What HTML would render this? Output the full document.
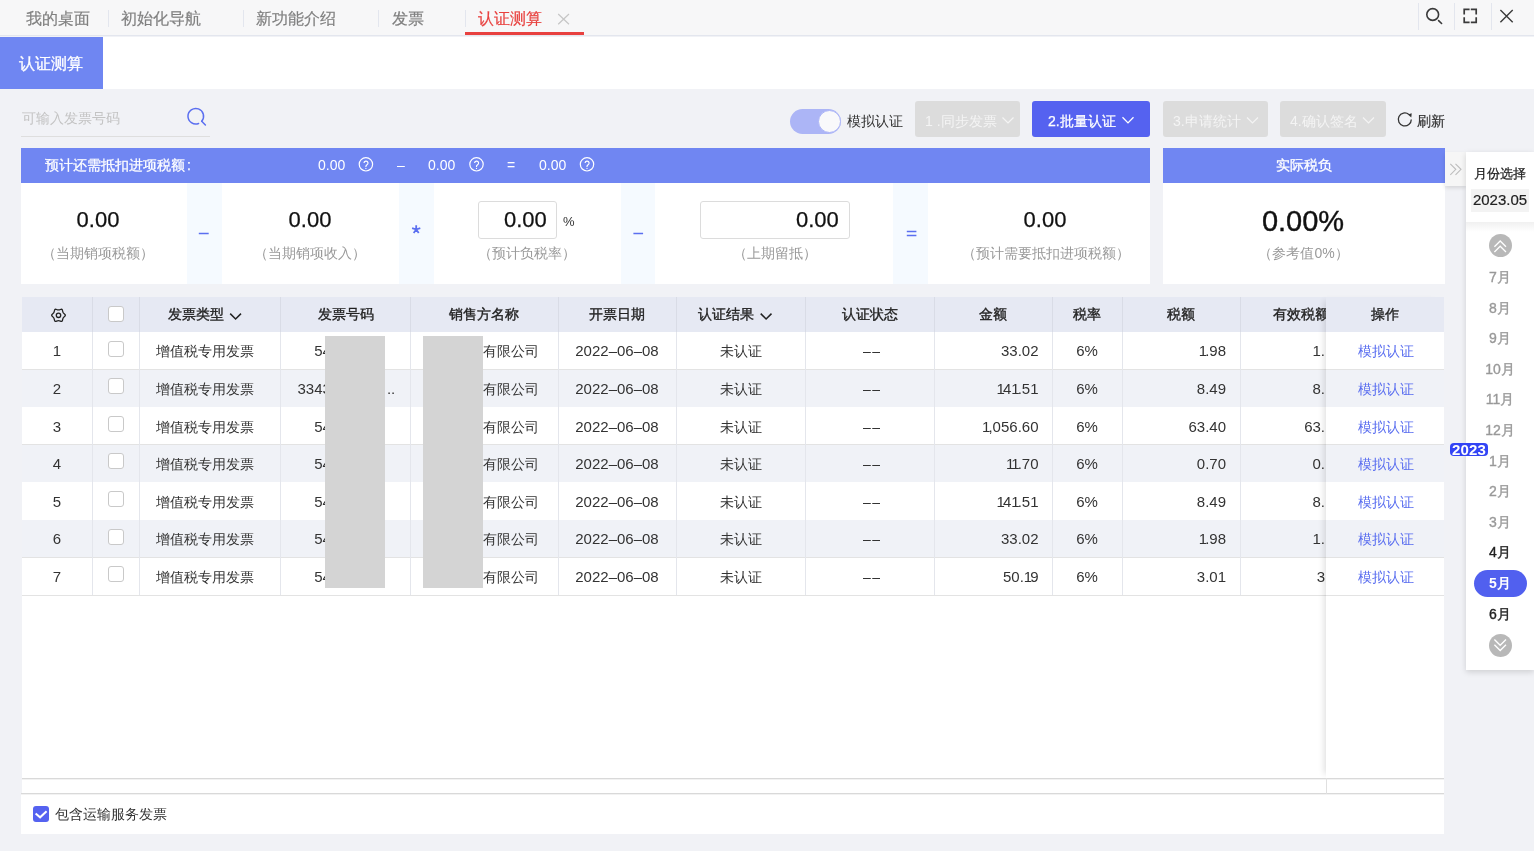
<!DOCTYPE html>
<html><head><meta charset="utf-8">
<style>
*{box-sizing:border-box;margin:0;padding:0}
html,body{width:1534px;height:851px;overflow:hidden;background:#f1f2f6;font-family:"Liberation Sans",sans-serif;color:#333}
.a{position:absolute;white-space:nowrap}
.c{position:absolute;white-space:nowrap;text-align:center}
.tab{position:absolute;top:9px;font-size:16px;line-height:20px;color:#808080;white-space:nowrap;-webkit-text-stroke:0.2px currentColor}
.sep{position:absolute;top:10px;width:1px;height:17px;background:#e3e6ee}
.btn{position:absolute;top:101px;height:36px;border-radius:3px;background:#dcdcdc;color:#f4f4f4;font-size:14px;white-space:nowrap}
.btn.pri{background:#5562f0;color:#fff}
.bar{position:absolute;top:148px;height:35px;background:#7086f2;color:#fff;font-size:14px}
.panel{position:absolute;top:183px;height:101px;background:#fff}
.big{font-size:22px;color:#111;line-height:26px;-webkit-text-stroke:0.25px #111}
.lbl{font-size:14px;color:#999;line-height:18px}
.opcol{position:absolute;top:183px;width:35px;height:101px;background:#f5faff}
.vl{position:absolute;width:1px;background:#e4e6ec}
.hl{position:absolute;height:1px;background:#e3e3e3}
.cb{position:absolute;width:16px;height:16px;border:1px solid #c9c9c9;border-radius:3px;background:#fff}
.td{position:absolute;font-size:14px;line-height:18px;color:#333;white-space:nowrap;overflow:hidden;text-align:center}
.mon{position:absolute;left:1466px;width:68px;text-align:center;font-size:14px;color:#999;line-height:18px}
</style></head><body>
<div id="root" style="position:absolute;left:0;top:0;width:1534px;height:851px;overflow:hidden;will-change:transform">
<div class="a" style="left:0px;top:0px;width:1534px;height:36px;background:#f7f7f8;border-bottom:1px solid #e3e6ee"></div>
<div class="tab" style="left:26px">我的桌面</div>
<div class="tab" style="left:121px">初始化导航</div>
<div class="tab" style="left:256px">新功能介绍</div>
<div class="tab" style="left:392px">发票</div>
<div class="sep" style="left:108px"></div>
<div class="sep" style="left:243px"></div>
<div class="sep" style="left:378px"></div>
<div class="sep" style="left:465px"></div>
<div class="tab" style="left:478px;color:#e8413f">认证测算</div>
<div class="a" style="left:465px;top:32px;width:119px;height:3px;background:#e8413f"></div>
<div class="sep" style="left:1418px;top:3px;height:27px"></div>
<div class="sep" style="left:1454px;top:3px;height:27px"></div>
<div class="sep" style="left:1491px;top:3px;height:27px"></div>
<div class="a" style="left:0px;top:37px;width:1534px;height:52px;background:#fff"></div>
<div class="a" style="left:0px;top:37px;width:103px;height:52px;background:#6f86f2"></div>
<div class="c " style="left:-149.5px;top:53.5px;width:400px;font-size:16px;line-height:20px;color:#fff;-webkit-text-stroke:0.3px #fff">认证测算</div>
<div class="a " style="left:22px;top:109px;font-size:14px;line-height:18px;color:#c3c3c3">可输入发票号码</div>
<div class="a" style="left:21px;top:136px;width:189px;height:1px;background:#dedede"></div>
<div class="a" style="left:790px;top:109px;width:51px;height:25px;border-radius:13px;background:#acb5f6"></div>
<div class="a" style="left:818px;top:110px;width:23px;height:23px;border-radius:50%;background:#f9f9fb;border:1.5px solid #acb5f6"></div>
<div class="a " style="left:847px;top:112px;font-size:14px;line-height:18px;color:#333">模拟认证</div>
<div class="btn" style="left:915px;width:105px"><span class="a" style="left:10px;top:11px;line-height:18px;">1 .同步发票</span></div>
<div class="btn pri" style="left:1032px;width:118px"><span class="a" style="left:16px;top:11px;line-height:18px;-webkit-text-stroke:0.25px #fff">2.批量认证</span></div>
<div class="btn" style="left:1163px;width:105px"><span class="a" style="left:10px;top:11px;line-height:18px;">3.申请统计</span></div>
<div class="btn" style="left:1280px;width:106px"><span class="a" style="left:10px;top:11px;line-height:18px;">4.确认签名</span></div>
<div class="a " style="left:1417px;top:112px;font-size:14px;line-height:18px;color:#333;-webkit-text-stroke:0.2px #333">刷新</div>
<div class="a" style="left:21px;top:148px;width:1129px;height:35px;background:#7086f2"></div>
<div class="a" style="left:1163px;top:148px;width:282px;height:35px;background:#7086f2"></div>
<div class="a " style="left:45px;top:156px;font-size:14px;line-height:18px;color:#fff;-webkit-text-stroke:0.25px #fff">预计还需抵扣进项税额<span style="margin-left:2px">:</span></div>
<div class="a " style="left:318px;top:156px;font-size:14px;line-height:18px;color:#fff">0.00</div>
<div class="a " style="left:428px;top:156px;font-size:14px;line-height:18px;color:#fff">0.00</div>
<div class="a " style="left:539px;top:156px;font-size:14px;line-height:18px;color:#fff">0.00</div>
<div class="a " style="left:397px;top:156px;font-size:14px;line-height:18px;color:#fff">–</div>
<div class="a " style="left:507px;top:156px;font-size:14px;line-height:18px;color:#fff">=</div>
<div class="c " style="left:1104px;top:156px;width:400px;font-size:14px;line-height:18px;color:#fff;-webkit-text-stroke:0.3px #fff">实际税负</div>
<div class="a" style="left:21px;top:183px;width:1129px;height:101px;background:#fff"></div>
<div class="a" style="left:1163px;top:183px;width:282px;height:101px;background:#fff"></div>
<div class="a" style="left:187px;top:183px;width:35px;height:101px;background:#f5faff"></div>
<div class="a" style="left:399px;top:183px;width:35px;height:101px;background:#f5faff"></div>
<div class="a" style="left:621px;top:183px;width:34px;height:101px;background:#f5faff"></div>
<div class="a" style="left:893px;top:183px;width:35px;height:101px;background:#f5faff"></div>
<div class="c big" style="left:-102px;top:207px;width:400px;">0.00</div>
<div class="c lbl" style="left:-102px;top:244px;width:400px;">（当期销项税额）</div>
<div class="c big" style="left:110px;top:207px;width:400px;">0.00</div>
<div class="c lbl" style="left:110px;top:244px;width:400px;">（当期销项收入）</div>
<div class="a" style="left:478px;top:201px;width:79px;height:38px;border:1px solid #dcdcdc;border-radius:3px;background:#fff"></div>
<div class="a big" style="left:504px;top:207px;">0.00</div>
<div class="a " style="left:563px;top:214px;font-size:13px;line-height:16px;color:#333">%</div>
<div class="c lbl" style="left:327px;top:244px;width:400px;">（预计负税率）</div>
<div class="a" style="left:700px;top:201px;width:150px;height:38px;border:1px solid #dcdcdc;border-radius:3px;background:#fff"></div>
<div class="a big" style="left:796px;top:207px;">0.00</div>
<div class="c lbl" style="left:575px;top:244px;width:400px;">（上期留抵）</div>
<div class="c big" style="left:845px;top:207px;width:400px;">0.00</div>
<div class="c lbl" style="left:846px;top:244px;width:400px;">（预计需要抵扣进项税额）</div>
<div class="c big" style="left:1103px;top:204px;width:400px;font-size:29px;line-height:34px;-webkit-text-stroke:0.4px #111">0.00%</div>
<div class="c lbl" style="left:1103.5px;top:244px;width:400px;">（参考值0%）</div>
<div class="a" style="left:22px;top:297px;width:1422px;height:537px;background:#fff"></div>
<div class="a" style="left:22px;top:297px;width:1422px;height:35px;background:#e6e9f3"></div>
<div class="a" style="left:22px;top:332.00px;width:1422px;height:37.60px;background:#fff"></div>
<div class="hl" style="left:22px;top:369.20px;width:1422px"></div>
<div class="a" style="left:22px;top:369.60px;width:1422px;height:37.60px;background:#f0f2f7"></div>
<div class="hl" style="left:22px;top:406.80px;width:1422px"></div>
<div class="a" style="left:22px;top:407.20px;width:1422px;height:37.60px;background:#fff"></div>
<div class="hl" style="left:22px;top:444.40px;width:1422px"></div>
<div class="a" style="left:22px;top:444.80px;width:1422px;height:37.60px;background:#f0f2f7"></div>
<div class="hl" style="left:22px;top:482.00px;width:1422px"></div>
<div class="a" style="left:22px;top:482.40px;width:1422px;height:37.60px;background:#fff"></div>
<div class="hl" style="left:22px;top:519.60px;width:1422px"></div>
<div class="a" style="left:22px;top:520.00px;width:1422px;height:37.60px;background:#f0f2f7"></div>
<div class="hl" style="left:22px;top:557.20px;width:1422px"></div>
<div class="a" style="left:22px;top:557.60px;width:1422px;height:37.60px;background:#fff"></div>
<div class="hl" style="left:22px;top:594.80px;width:1422px"></div>
<div class="vl" style="left:92px;top:297px;height:35px;background:#d9dce6"></div>
<div class="vl" style="left:92px;top:332px;height:263.20px"></div>
<div class="vl" style="left:139px;top:297px;height:35px;background:#d9dce6"></div>
<div class="vl" style="left:139px;top:332px;height:263.20px"></div>
<div class="vl" style="left:280px;top:297px;height:35px;background:#d9dce6"></div>
<div class="vl" style="left:280px;top:332px;height:263.20px"></div>
<div class="vl" style="left:410px;top:297px;height:35px;background:#d9dce6"></div>
<div class="vl" style="left:410px;top:332px;height:263.20px"></div>
<div class="vl" style="left:558px;top:297px;height:35px;background:#d9dce6"></div>
<div class="vl" style="left:558px;top:332px;height:263.20px"></div>
<div class="vl" style="left:676px;top:297px;height:35px;background:#d9dce6"></div>
<div class="vl" style="left:676px;top:332px;height:263.20px"></div>
<div class="vl" style="left:805px;top:297px;height:35px;background:#d9dce6"></div>
<div class="vl" style="left:805px;top:332px;height:263.20px"></div>
<div class="vl" style="left:934px;top:297px;height:35px;background:#d9dce6"></div>
<div class="vl" style="left:934px;top:332px;height:263.20px"></div>
<div class="vl" style="left:1052px;top:297px;height:35px;background:#d9dce6"></div>
<div class="vl" style="left:1052px;top:332px;height:263.20px"></div>
<div class="vl" style="left:1122px;top:297px;height:35px;background:#d9dce6"></div>
<div class="vl" style="left:1122px;top:332px;height:263.20px"></div>
<div class="vl" style="left:1240px;top:297px;height:35px;background:#d9dce6"></div>
<div class="vl" style="left:1240px;top:332px;height:263.20px"></div>
<div class="cb" style="left:108px;top:306px"></div>
<div class="c " style="left:5px;top:304.5px;width:400px;font-size:14px;line-height:18px;color:#222;-webkit-text-stroke:0.35px #222">发票类型<span style="display:inline-block;width:19px"></span></div>
<div class="c " style="left:145.5px;top:304.5px;width:400px;font-size:14px;line-height:18px;color:#222;-webkit-text-stroke:0.35px #222">发票号码</div>
<div class="c " style="left:284px;top:304.5px;width:400px;font-size:14px;line-height:18px;color:#222;-webkit-text-stroke:0.35px #222">销售方名称</div>
<div class="c " style="left:417px;top:304.5px;width:400px;font-size:14px;line-height:18px;color:#222;-webkit-text-stroke:0.35px #222">开票日期</div>
<div class="c " style="left:535.5px;top:304.5px;width:400px;font-size:14px;line-height:18px;color:#222;-webkit-text-stroke:0.35px #222">认证结果<span style="display:inline-block;width:19px"></span></div>
<div class="c " style="left:669.5px;top:304.5px;width:400px;font-size:14px;line-height:18px;color:#222;-webkit-text-stroke:0.35px #222">认证状态</div>
<div class="c " style="left:793px;top:304.5px;width:400px;font-size:14px;line-height:18px;color:#222;-webkit-text-stroke:0.35px #222">金额</div>
<div class="c " style="left:887px;top:304.5px;width:400px;font-size:14px;line-height:18px;color:#222;-webkit-text-stroke:0.35px #222">税率</div>
<div class="c " style="left:981px;top:304.5px;width:400px;font-size:14px;line-height:18px;color:#222;-webkit-text-stroke:0.35px #222">税额</div>
<div class="a" style="left:1240px;top:304.5px;width:86px;line-height:18px;text-align:right;font-size:14px;color:#222;-webkit-text-stroke:0.35px #222;overflow:hidden"><span style="margin-right:-3px">有效税额</span></div>
<div class="td" style="left:22px;top:342.30px;width:70px;text-align:center;color:#333;font-size:15px">1</div>
<div class="cb" style="left:108px;top:340.50px"></div>
<div class="td" style="left:134px;top:342.30px;width:142px;text-align:center;color:#333;">增值税专用发票</div>
<div class="td" style="left:280px;top:342.30px;width:130px;text-align:center;color:#333;font-size:15px;padding-left:5px">54000000</div>
<div class="td" style="left:410px;top:342.30px;width:148px;text-align:left;color:#333;"><span style="padding-left:73px">有限公司</span></div>
<div class="td" style="left:558px;top:342.30px;width:118px;text-align:center;color:#333;font-size:15px">2022–06–08</div>
<div class="td" style="left:676px;top:342.30px;width:129px;text-align:center;color:#333;">未认证</div>
<div class="td" style="left:805px;top:342.30px;width:129px;text-align:center;color:#333;font-size:14px;padding-left:5.5px;letter-spacing:1.5px">––</div>
<div class="td" style="left:934px;top:342.30px;width:118px;text-align:right;color:#333;padding-right:13.5px;font-size:15px">33.02</div>
<div class="td" style="left:1052px;top:342.30px;width:70px;text-align:center;color:#333;font-size:15px">6%</div>
<div class="td" style="left:1122px;top:342.30px;width:118px;text-align:right;color:#333;padding-right:14px;font-size:15px"><span style="letter-spacing:-2px">1</span>.98</div>
<div class="td" style="left:1240px;top:342.30px;width:85px;text-align:right;color:#333;font-size:15px">1.</div>
<div class="td" style="left:22px;top:379.90px;width:70px;text-align:center;color:#333;font-size:15px">2</div>
<div class="cb" style="left:108px;top:378.10px"></div>
<div class="td" style="left:134px;top:379.90px;width:142px;text-align:center;color:#333;">增值税专用发票</div>
<div class="td" style="left:280px;top:379.90px;width:130px;text-align:left;color:#333;padding-left:17.5px;font-size:15px">3343<span style="display:inline-block;width:56px"></span>..</div>
<div class="td" style="left:410px;top:379.90px;width:148px;text-align:left;color:#333;"><span style="padding-left:73px">有限公司</span></div>
<div class="td" style="left:558px;top:379.90px;width:118px;text-align:center;color:#333;font-size:15px">2022–06–08</div>
<div class="td" style="left:676px;top:379.90px;width:129px;text-align:center;color:#333;">未认证</div>
<div class="td" style="left:805px;top:379.90px;width:129px;text-align:center;color:#333;font-size:14px;padding-left:5.5px;letter-spacing:1.5px">––</div>
<div class="td" style="left:934px;top:379.90px;width:118px;text-align:right;color:#333;padding-right:13.5px;font-size:15px"><span style="letter-spacing:-2px">1</span>4<span style="letter-spacing:-2px">1</span>.51</div>
<div class="td" style="left:1052px;top:379.90px;width:70px;text-align:center;color:#333;font-size:15px">6%</div>
<div class="td" style="left:1122px;top:379.90px;width:118px;text-align:right;color:#333;padding-right:14px;font-size:15px">8.49</div>
<div class="td" style="left:1240px;top:379.90px;width:85px;text-align:right;color:#333;font-size:15px">8.</div>
<div class="td" style="left:22px;top:417.50px;width:70px;text-align:center;color:#333;font-size:15px">3</div>
<div class="cb" style="left:108px;top:415.70px"></div>
<div class="td" style="left:134px;top:417.50px;width:142px;text-align:center;color:#333;">增值税专用发票</div>
<div class="td" style="left:280px;top:417.50px;width:130px;text-align:center;color:#333;font-size:15px;padding-left:5px">54000000</div>
<div class="td" style="left:410px;top:417.50px;width:148px;text-align:left;color:#333;"><span style="padding-left:73px">有限公司</span></div>
<div class="td" style="left:558px;top:417.50px;width:118px;text-align:center;color:#333;font-size:15px">2022–06–08</div>
<div class="td" style="left:676px;top:417.50px;width:129px;text-align:center;color:#333;">未认证</div>
<div class="td" style="left:805px;top:417.50px;width:129px;text-align:center;color:#333;font-size:14px;padding-left:5.5px;letter-spacing:1.5px">––</div>
<div class="td" style="left:934px;top:417.50px;width:118px;text-align:right;color:#333;padding-right:13.5px;font-size:15px"><span style="letter-spacing:-2px">1</span>,056.60</div>
<div class="td" style="left:1052px;top:417.50px;width:70px;text-align:center;color:#333;font-size:15px">6%</div>
<div class="td" style="left:1122px;top:417.50px;width:118px;text-align:right;color:#333;padding-right:14px;font-size:15px">63.40</div>
<div class="td" style="left:1240px;top:417.50px;width:85px;text-align:right;color:#333;font-size:15px">63.</div>
<div class="td" style="left:22px;top:455.10px;width:70px;text-align:center;color:#333;font-size:15px">4</div>
<div class="cb" style="left:108px;top:453.30px"></div>
<div class="td" style="left:134px;top:455.10px;width:142px;text-align:center;color:#333;">增值税专用发票</div>
<div class="td" style="left:280px;top:455.10px;width:130px;text-align:center;color:#333;font-size:15px;padding-left:5px">54000000</div>
<div class="td" style="left:410px;top:455.10px;width:148px;text-align:left;color:#333;"><span style="padding-left:73px">有限公司</span></div>
<div class="td" style="left:558px;top:455.10px;width:118px;text-align:center;color:#333;font-size:15px">2022–06–08</div>
<div class="td" style="left:676px;top:455.10px;width:129px;text-align:center;color:#333;">未认证</div>
<div class="td" style="left:805px;top:455.10px;width:129px;text-align:center;color:#333;font-size:14px;padding-left:5.5px;letter-spacing:1.5px">––</div>
<div class="td" style="left:934px;top:455.10px;width:118px;text-align:right;color:#333;padding-right:13.5px;font-size:15px"><span style="letter-spacing:-2px">1</span><span style="letter-spacing:-2px">1</span>.70</div>
<div class="td" style="left:1052px;top:455.10px;width:70px;text-align:center;color:#333;font-size:15px">6%</div>
<div class="td" style="left:1122px;top:455.10px;width:118px;text-align:right;color:#333;padding-right:14px;font-size:15px">0.70</div>
<div class="td" style="left:1240px;top:455.10px;width:85px;text-align:right;color:#333;font-size:15px">0.</div>
<div class="td" style="left:22px;top:492.70px;width:70px;text-align:center;color:#333;font-size:15px">5</div>
<div class="cb" style="left:108px;top:490.90px"></div>
<div class="td" style="left:134px;top:492.70px;width:142px;text-align:center;color:#333;">增值税专用发票</div>
<div class="td" style="left:280px;top:492.70px;width:130px;text-align:center;color:#333;font-size:15px;padding-left:5px">54000000</div>
<div class="td" style="left:410px;top:492.70px;width:148px;text-align:left;color:#333;"><span style="padding-left:73px">有限公司</span></div>
<div class="td" style="left:558px;top:492.70px;width:118px;text-align:center;color:#333;font-size:15px">2022–06–08</div>
<div class="td" style="left:676px;top:492.70px;width:129px;text-align:center;color:#333;">未认证</div>
<div class="td" style="left:805px;top:492.70px;width:129px;text-align:center;color:#333;font-size:14px;padding-left:5.5px;letter-spacing:1.5px">––</div>
<div class="td" style="left:934px;top:492.70px;width:118px;text-align:right;color:#333;padding-right:13.5px;font-size:15px"><span style="letter-spacing:-2px">1</span>4<span style="letter-spacing:-2px">1</span>.51</div>
<div class="td" style="left:1052px;top:492.70px;width:70px;text-align:center;color:#333;font-size:15px">6%</div>
<div class="td" style="left:1122px;top:492.70px;width:118px;text-align:right;color:#333;padding-right:14px;font-size:15px">8.49</div>
<div class="td" style="left:1240px;top:492.70px;width:85px;text-align:right;color:#333;font-size:15px">8.</div>
<div class="td" style="left:22px;top:530.30px;width:70px;text-align:center;color:#333;font-size:15px">6</div>
<div class="cb" style="left:108px;top:528.50px"></div>
<div class="td" style="left:134px;top:530.30px;width:142px;text-align:center;color:#333;">增值税专用发票</div>
<div class="td" style="left:280px;top:530.30px;width:130px;text-align:center;color:#333;font-size:15px;padding-left:5px">54000000</div>
<div class="td" style="left:410px;top:530.30px;width:148px;text-align:left;color:#333;"><span style="padding-left:73px">有限公司</span></div>
<div class="td" style="left:558px;top:530.30px;width:118px;text-align:center;color:#333;font-size:15px">2022–06–08</div>
<div class="td" style="left:676px;top:530.30px;width:129px;text-align:center;color:#333;">未认证</div>
<div class="td" style="left:805px;top:530.30px;width:129px;text-align:center;color:#333;font-size:14px;padding-left:5.5px;letter-spacing:1.5px">––</div>
<div class="td" style="left:934px;top:530.30px;width:118px;text-align:right;color:#333;padding-right:13.5px;font-size:15px">33.02</div>
<div class="td" style="left:1052px;top:530.30px;width:70px;text-align:center;color:#333;font-size:15px">6%</div>
<div class="td" style="left:1122px;top:530.30px;width:118px;text-align:right;color:#333;padding-right:14px;font-size:15px"><span style="letter-spacing:-2px">1</span>.98</div>
<div class="td" style="left:1240px;top:530.30px;width:85px;text-align:right;color:#333;font-size:15px">1.</div>
<div class="td" style="left:22px;top:567.90px;width:70px;text-align:center;color:#333;font-size:15px">7</div>
<div class="cb" style="left:108px;top:566.10px"></div>
<div class="td" style="left:134px;top:567.90px;width:142px;text-align:center;color:#333;">增值税专用发票</div>
<div class="td" style="left:280px;top:567.90px;width:130px;text-align:center;color:#333;font-size:15px;padding-left:5px">54000000</div>
<div class="td" style="left:410px;top:567.90px;width:148px;text-align:left;color:#333;"><span style="padding-left:73px">有限公司</span></div>
<div class="td" style="left:558px;top:567.90px;width:118px;text-align:center;color:#333;font-size:15px">2022–06–08</div>
<div class="td" style="left:676px;top:567.90px;width:129px;text-align:center;color:#333;">未认证</div>
<div class="td" style="left:805px;top:567.90px;width:129px;text-align:center;color:#333;font-size:14px;padding-left:5.5px;letter-spacing:1.5px">––</div>
<div class="td" style="left:934px;top:567.90px;width:118px;text-align:right;color:#333;padding-right:13.5px;font-size:15px">50.<span style="letter-spacing:-2px">1</span>9</div>
<div class="td" style="left:1052px;top:567.90px;width:70px;text-align:center;color:#333;font-size:15px">6%</div>
<div class="td" style="left:1122px;top:567.90px;width:118px;text-align:right;color:#333;padding-right:14px;font-size:15px">3.01</div>
<div class="td" style="left:1240px;top:567.90px;width:85px;text-align:right;color:#333;font-size:15px">3</div>
<div class="a" style="left:1326px;top:297px;width:118px;height:481px;background:#fff;box-shadow:-6px 0 6px -4px rgba(0,0,0,0.12)"></div>
<div class="a" style="left:1326px;top:297px;width:118px;height:35px;background:#e6e9f3"></div>
<div class="c " style="left:1185px;top:304.5px;width:400px;font-size:14px;line-height:18px;color:#222;-webkit-text-stroke:0.35px #222">操作</div>
<div class="a" style="left:1326px;top:332.00px;width:118px;height:37.60px;background:#fff"></div>
<div class="hl" style="left:1326px;top:369.20px;width:118px"></div>
<div class="td" style="left:1326.5px;top:342.30px;width:118px;color:#5b6ff0">模拟认证</div>
<div class="a" style="left:1326px;top:369.60px;width:118px;height:37.60px;background:#f0f2f7"></div>
<div class="hl" style="left:1326px;top:406.80px;width:118px"></div>
<div class="td" style="left:1326.5px;top:379.90px;width:118px;color:#5b6ff0">模拟认证</div>
<div class="a" style="left:1326px;top:407.20px;width:118px;height:37.60px;background:#fff"></div>
<div class="hl" style="left:1326px;top:444.40px;width:118px"></div>
<div class="td" style="left:1326.5px;top:417.50px;width:118px;color:#5b6ff0">模拟认证</div>
<div class="a" style="left:1326px;top:444.80px;width:118px;height:37.60px;background:#f0f2f7"></div>
<div class="hl" style="left:1326px;top:482.00px;width:118px"></div>
<div class="td" style="left:1326.5px;top:455.10px;width:118px;color:#5b6ff0">模拟认证</div>
<div class="a" style="left:1326px;top:482.40px;width:118px;height:37.60px;background:#fff"></div>
<div class="hl" style="left:1326px;top:519.60px;width:118px"></div>
<div class="td" style="left:1326.5px;top:492.70px;width:118px;color:#5b6ff0">模拟认证</div>
<div class="a" style="left:1326px;top:520.00px;width:118px;height:37.60px;background:#f0f2f7"></div>
<div class="hl" style="left:1326px;top:557.20px;width:118px"></div>
<div class="td" style="left:1326.5px;top:530.30px;width:118px;color:#5b6ff0">模拟认证</div>
<div class="a" style="left:1326px;top:557.60px;width:118px;height:37.60px;background:#fff"></div>
<div class="hl" style="left:1326px;top:594.80px;width:118px"></div>
<div class="td" style="left:1326.5px;top:567.90px;width:118px;color:#5b6ff0">模拟认证</div>
<div class="a" style="left:325px;top:336px;width:60px;height:252px;background:#d4d4d4"></div>
<div class="a" style="left:423px;top:336px;width:60px;height:252px;background:#d4d4d4"></div>
<div class="a" style="left:22px;top:778px;width:1422px;height:1px;background:#d9d9d9"></div>
<div class="a" style="left:22px;top:779px;width:1422px;height:1px;background:#f2f2f2"></div>
<div class="a" style="left:21px;top:794px;width:1423px;height:40px;background:#fff"></div>
<div class="a" style="left:21px;top:793px;width:1423px;height:1px;background:#d9d9d9"></div>
<div class="a" style="left:21px;top:794px;width:1423px;height:1px;background:#f2f2f2"></div>
<div class="a" style="left:1326px;top:778px;width:1px;height:16px;background:#e0e0e0"></div>
<div class="a" style="left:33px;top:806px;width:16px;height:16px;border-radius:3px;background:#5562f0"></div>
<div class="a " style="left:55px;top:805px;font-size:14px;line-height:18px;color:#333">包含运输服务发票</div>
<div class="a" style="left:1445px;top:152px;width:21px;height:34px;background:#f6f6f6;box-shadow:0 2px 4px rgba(0,0,0,0.12)"></div>
<div class="a" style="left:1466px;top:152px;width:68px;height:518px;background:#fff;box-shadow:0 2px 6px rgba(0,0,0,0.15)"></div>
<div class="a" style="left:1466px;top:222px;width:68px;height:10px;background:linear-gradient(rgba(0,0,0,0.06),rgba(0,0,0,0))"></div>
<div class="mon" style="top:164.5px;color:#222;font-size:13px;-webkit-text-stroke:0.25px #222">月份选择</div>
<div class="a" style="left:1471px;top:189px;width:58px;height:23px;background:#f3f3f3"></div>
<div class="c " style="left:1300px;top:191px;width:400px;font-size:15px;line-height:18px;color:#222;-webkit-text-stroke:0.2px #222">2023.05</div>
<div class="a" style="left:1489px;top:234px;width:23px;height:23px;border-radius:50%;background:#b8b8b8"></div>
<div class="mon" style="top:268.0px;color:#999;-webkit-text-stroke:0.35px #999">7月</div>
<div class="mon" style="top:298.6px;color:#999;-webkit-text-stroke:0.35px #999">8月</div>
<div class="mon" style="top:329.2px;color:#999;-webkit-text-stroke:0.35px #999">9月</div>
<div class="mon" style="top:359.8px;color:#999;-webkit-text-stroke:0.35px #999">10月</div>
<div class="mon" style="top:390.4px;color:#999;-webkit-text-stroke:0.35px #999">11月</div>
<div class="mon" style="top:421.0px;color:#999;-webkit-text-stroke:0.35px #999">12月</div>
<div class="mon" style="top:451.6px;color:#999;-webkit-text-stroke:0.35px #999">1月</div>
<div class="mon" style="top:482.2px;color:#999;-webkit-text-stroke:0.35px #999">2月</div>
<div class="mon" style="top:512.8px;color:#999;-webkit-text-stroke:0.35px #999">3月</div>
<div class="mon" style="top:543.4px;color:#222;-webkit-text-stroke:0.35px #222">4月</div>
<div class="a" style="left:1474px;top:570px;width:53px;height:27px;border-radius:14px;background:#5160ef"></div>
<div class="mon" style="top:574.0px;color:#fff;font-weight:bold">5月</div>
<div class="mon" style="top:604.6px;color:#222;-webkit-text-stroke:0.35px #222">6月</div>
<div class="a" style="left:1489px;top:634px;width:23px;height:23px;border-radius:50%;background:#b8b8b8"></div>
<div class="a" style="left:1450px;top:442.5px;width:38px;height:13.5px;border-radius:4px;background:#3344f5;color:#fff;font-weight:bold;font-size:15px;line-height:14px;text-align:center;letter-spacing:0.2px">2023</div>
<svg class="a" style="left:0;top:0" width="1534" height="851" viewBox="0 0 1534 851"><circle cx="1432.7" cy="14.5" r="5.9" fill="none" stroke="#3a3a3a" stroke-width="1.6"/><path d="M1438.6 20.6L1441.6 23.5" stroke="#3a3a3a" stroke-width="1.6" stroke-linecap="round"/><path d="M1464.2 14.5V9.4H1469.6M1470.8 9.4H1476.2V14.5M1476.2 17.3V22.4H1470.8M1469.6 22.4H1464.2V17.3" fill="none" stroke="#3a3a3a" stroke-width="1.7"/><path d="M1500.4 10L1512.7 22.2M1512.7 10L1500.4 22.2" stroke="#3a3a3a" stroke-width="1.4"/><path d="M558.2 14L569 24.2M569 14L558.2 24.2" stroke="#c6c6c6" stroke-width="1.2"/><path d="M201.7 121.3A7.8 7.8 0 1 0 198.6 123.5" fill="none" stroke="#5b6ff0" stroke-width="1.5" stroke-linecap="round"/><path d="M201.7 121.3L205.4 125" stroke="#5b6ff0" stroke-width="1.5" stroke-linecap="round"/><path d="M1411.3 119.5A6.5 6.5 0 1 1 1408.9 114.4" fill="none" stroke="#333" stroke-width="1.3"/><path d="M1407.9 114.6L1411.7 113.3L1411.3 117.4Z" fill="#333"/><circle cx="365.9" cy="164.3" r="6.7" fill="none" stroke="#fff" stroke-width="1.2"/><path d="M364.0 163.1A2 2 0 1 1 366.79999999999995 164.9C366.09999999999997 165.3 365.9 165.8 365.9 166.5V167" fill="none" stroke="#fff" stroke-width="1.15"/><circle cx="365.9" cy="168.4" r=".6" fill="#fff"/><circle cx="476.5" cy="164.3" r="6.7" fill="none" stroke="#fff" stroke-width="1.2"/><path d="M474.6 163.1A2 2 0 1 1 477.4 164.9C476.7 165.3 476.5 165.8 476.5 166.5V167" fill="none" stroke="#fff" stroke-width="1.15"/><circle cx="476.5" cy="168.4" r=".6" fill="#fff"/><circle cx="587" cy="164.3" r="6.7" fill="none" stroke="#fff" stroke-width="1.2"/><path d="M585.1 163.1A2 2 0 1 1 587.9 164.9C587.2 165.3 587 165.8 587 166.5V167" fill="none" stroke="#fff" stroke-width="1.15"/><circle cx="587" cy="168.4" r=".6" fill="#fff"/><path d="M1002.5 117.5L1008.0 123.0L1013.5 117.5" fill="none" stroke="#f4f4f4" stroke-width="1.2"/><path d="M1122.5 117.3L1128.0 122.89999999999999L1133.5 117.3" fill="none" stroke="#fff" stroke-width="1.3"/><path d="M1247 117.5L1252.5 123.0L1258 117.5" fill="none" stroke="#f4f4f4" stroke-width="1.2"/><path d="M1363 117.5L1368.5 123.0L1374 117.5" fill="none" stroke="#f4f4f4" stroke-width="1.2"/><path d="M230.2 313.6L235.6 319.0L241.0 313.6" fill="none" stroke="#222" stroke-width="1.5"/><path d="M760.7 313.6L766.1 319.0L771.5 313.6" fill="none" stroke="#222" stroke-width="1.5"/><path d="M64.47 314.08Q66.20 315.30 64.47 316.52Q62.74 317.75 62.55 319.86Q62.35 321.97 60.42 321.08Q58.50 320.20 56.58 321.08Q54.65 321.97 54.45 319.86Q54.26 317.75 52.53 316.52Q50.80 315.30 52.53 314.08Q54.26 312.85 54.45 310.74Q54.65 308.63 56.58 309.52Q58.50 310.40 60.42 309.52Q62.35 308.63 62.55 310.74Q62.74 312.85 64.47 314.08Z" fill="none" stroke="#222" stroke-width="1.3" stroke-linejoin="round"/><circle cx="58.5" cy="315.3" r="2.2" fill="none" stroke="#222" stroke-width="1.3"/><path d="M1450.3 163.8L1455.8 169.3L1450.3 174.8M1455.5 163.8L1461 169.3L1455.5 174.8" fill="none" stroke="#bdbdbd" stroke-width="1.1"/><path d="M1494.4 246.8L1500.2 241L1506 246.8M1494.4 252L1500.2 246.2L1506 252" fill="none" stroke="#fff" stroke-width="1.3"/><path d="M1494.4 639.5L1500.2 645.3L1506 639.5M1494.4 644.7L1500.2 650.5L1506 644.7" fill="none" stroke="#fff" stroke-width="1.3"/><path d="M198.8 233.5H208.7M633.4 233.5H643.1M906.8 231.6H916.4M906.8 235.4H916.4" stroke="#5b6ff0" stroke-width="1.5"/><path d="M416.2 229.5L416.20 225.20M416.2 229.5L420.29 228.17M416.2 229.5L418.73 232.98M416.2 229.5L413.67 232.98M416.2 229.5L412.11 228.17" stroke="#5b6ff0" stroke-width="1.8"/><path d="M35.6 813.4L40.1 817.3L46.6 811.2" fill="none" stroke="#fff" stroke-width="2"/></svg>
</div>
</body></html>
